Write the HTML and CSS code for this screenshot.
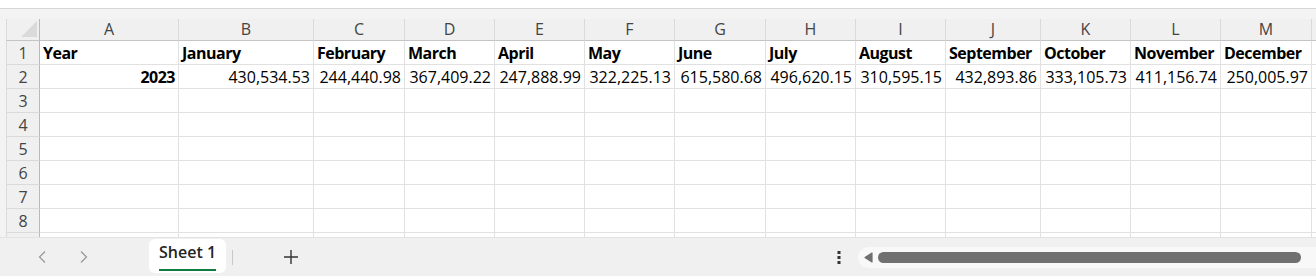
FILE: index.html
```html
<html>
  <head>
    <title> Sheet 1 </title>
    <link rel="stylesheet" href="styles.css">
  </head>
  <body>
    <div class="topgap"></div>
    <div class="sheet">
      <div class="grid">
        <div class="row head">
          <div class="corner"><span class="tri"></span></div>
          <div>A</div><div>B</div><div>C</div><div>D</div><div>E</div><div>F</div><div>G</div>
          <div>H</div><div>I</div><div>J</div><div>K</div><div>L</div><div>M</div><div></div>
        </div>
        <div class="row">
          <div class="num">1</div>
          <div class="b">Year</div><div class="b">January</div><div class="b">February</div><div class="b">March</div>
          <div class="b">April</div><div class="b">May</div><div class="b">June</div><div class="b">July</div>
          <div class="b">August</div><div class="b">September</div><div class="b">October</div><div class="b">November</div>
          <div class="b">December</div><div></div>
        </div>
        <div class="row">
          <div class="num">2</div>
          <div class="b r">2023</div><div class="r">430,534.53</div><div class="r">244,440.98</div><div class="r">367,409.22</div>
          <div class="r">247,888.99</div><div class="r">322,225.13</div><div class="r">615,580.68</div><div class="r">496,620.15</div>
          <div class="r">310,595.15</div><div class="r">432,893.86</div><div class="r">333,105.73</div><div class="r">411,156.74</div>
          <div class="r">250,005.97</div><div></div>
        </div>
        <div class="row"><div class="num">3</div><div></div><div></div><div></div><div></div><div></div><div></div><div></div><div></div><div></div><div></div><div></div><div></div><div></div><div></div></div>
        <div class="row"><div class="num">4</div><div></div><div></div><div></div><div></div><div></div><div></div><div></div><div></div><div></div><div></div><div></div><div></div><div></div><div></div></div>
        <div class="row"><div class="num">5</div><div></div><div></div><div></div><div></div><div></div><div></div><div></div><div></div><div></div><div></div><div></div><div></div><div></div><div></div></div>
        <div class="row"><div class="num">6</div><div></div><div></div><div></div><div></div><div></div><div></div><div></div><div></div><div></div><div></div><div></div><div></div><div></div><div></div></div>
        <div class="row"><div class="num">7</div><div></div><div></div><div></div><div></div><div></div><div></div><div></div><div></div><div></div><div></div><div></div><div></div><div></div><div></div></div>
        <div class="row"><div class="num">8</div><div></div><div></div><div></div><div></div><div></div><div></div><div></div><div></div><div></div><div></div><div></div><div></div><div></div><div></div></div>
        <div class="row"><div class="num"></div><div></div><div></div><div></div><div></div><div></div><div></div><div></div><div></div><div></div><div></div><div></div><div></div><div></div><div></div></div>
      </div>
    </div>
    <div class="tabbar">
      <div class="nav">
        <svg width="8" height="12" viewBox="0 0 8 12"><polyline points="7,0.5 1.5,6 7,11.5" fill="none" stroke="#9a9a9a" stroke-width="1.3"/></svg>
        <svg width="8" height="12" viewBox="0 0 8 12"><polyline points="1,0.5 6.5,6 1,11.5" fill="none" stroke="#9a9a9a" stroke-width="1.3"/></svg>
      </div>
      <div class="tab"><span>Sheet 1</span></div>
      <div class="sep"></div>
      <svg class="plus" width="14" height="14" viewBox="0 0 14 14"><path d="M7 0V14M0 7H14" stroke="#333" stroke-width="1.4"/></svg>
      <svg class="dots" width="4" height="13" viewBox="0 0 4 13"><rect x="0.5" y="0" width="3" height="3" fill="#333"/><rect x="0.5" y="5" width="3" height="3" fill="#333"/><rect x="0.5" y="10" width="3" height="3" fill="#333"/></svg>
      <div class="track">
        <svg width="10" height="11" viewBox="0 0 10 11"><path d="M9 1V10L2 5.5Z" fill="#707070" stroke="#707070" stroke-width="1.2" stroke-linejoin="round"/></svg>
        <div class="thumb"></div>
      </div>
    </div>
  </body>
</html>
```

FILE: styles.css
```css
body {
  margin: 0;
  font: 16px "Open Sans", "Noto Sans", sans-serif;
  color: #000;
  background: #fff;
  overflow: hidden;
}
.topgap {
  height: 8px;
  border-bottom: 1px solid #d6d6d6;
}
/* BEGIN grid stuff */
.sheet {
  background: #f3f3f3;
  padding: 10px 0 0 6px;
  height: 218px;
  overflow: hidden;
}
.grid {
  height: 218px;
  overflow: hidden;
}
.row {
  display: grid;
  grid-template-columns: 34px 139px 135px 91px 90px 90px 90px 91px 90px 90px 95px 90px 90px 91px 60px;
  height: 24px;
}
.row div {
  box-sizing: border-box;
  border-right: 1px solid #e1e1e1;
  border-bottom: 1px solid #e1e1e1;
  background: #fff;
  line-height: 24px;
  padding: 0 3px;
  white-space: nowrap;
  overflow: hidden;
}
.row div.num {
  background: #f0f0f0;
  border-left: 1px solid #dadada;
  border-right: 1px solid #b9b9b9;
  border-bottom-color: #dadada;
  color: #444;
  text-align: center;
  padding: 0;
}
.row div.b { font-weight: bold; letter-spacing: -0.5px; }
.row div.r { text-align: right; }
.row.head { height: 22px; }
.row.head div {
  background: #f0f0f0;
  border-right-color: #dadada;
  border-bottom-color: #c4c4c4;
  color: #444;
  text-align: center;
  line-height: 21px;
}
.row.head div.corner {
  position: relative;
  border-left: 1px solid #dadada;
  border-right-color: #b9b9b9;
}
.tri {
  position: absolute;
  right: 2px;
  bottom: 3px;
  width: 0;
  height: 0;
  border-left: 16px solid transparent;
  border-bottom: 16px solid #dadada;
}
/* END grid stuff */
/* BEGIN tab stuff */
.tabbar {
  display: flex;
  align-items: center;
  height: 38px;
  background: #f0f0f0;
  border-top: 1px solid #e3e3e3;
}
.nav {
  display: flex;
  gap: 34px;
  padding-left: 38px;
}
.tab {
  align-self: flex-start;
  margin: 1px 0 0 61px;
  height: 34px;
  padding: 0 10px;
  background: #fff;
  border-radius: 6px;
  box-sizing: border-box;
}
.tab span {
  display: block;
  height: 30px;
  line-height: 27px;
  font-weight: 600;
  color: #242424;
  border-bottom: 2px solid #107c41;
}
.sep {
  width: 1px;
  height: 15px;
  margin-left: 6px;
  background: #c8c8c8;
}
.plus { margin-left: 51px; }
.dots { margin-left: auto; margin-right: 17px; }
.track {
  display: flex;
  align-items: center;
  width: 458px;
  height: 21px;
  padding-left: 5px;
  box-sizing: border-box;
  background: #f8f8f8;
  border-radius: 11px 0 0 11px;
}
.thumb {
  width: 423px;
  height: 11px;
  margin-left: 5px;
  background: #707070;
  border-radius: 6px;
}
/* END tab stuff */
```
